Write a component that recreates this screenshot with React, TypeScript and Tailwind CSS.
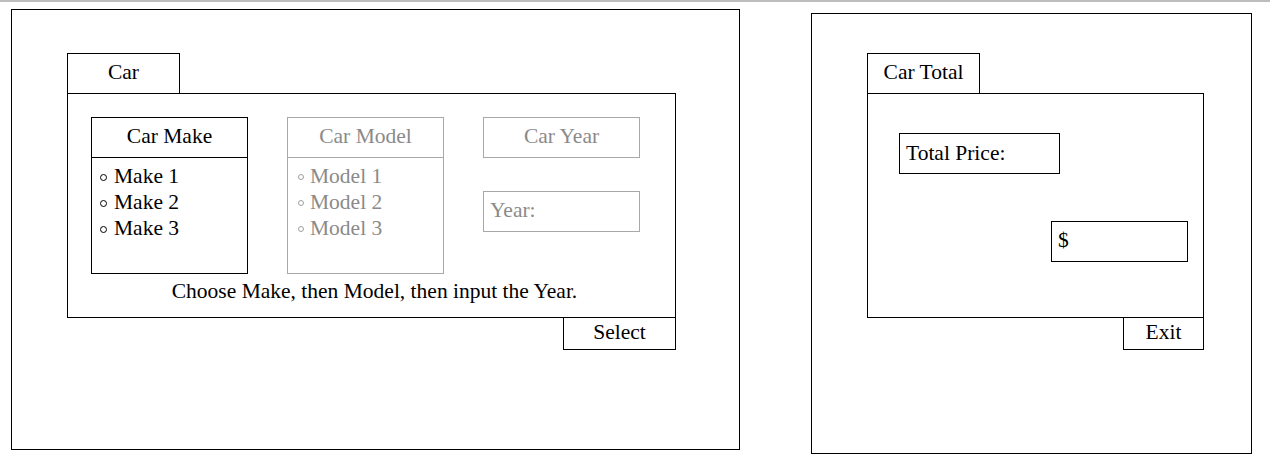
import React from 'react';

// round bullet used in the make / model lists
const Bullet = ({ muted }: { muted?: boolean }) => (
  <span
    className={`inline-block rounded-full border ${muted ? 'w-[6px] h-[6px] border-[#a0a0a0] mr-[6px]' : 'w-[7px] h-[7px] border-black mr-[7px]'}`}
  />
);

const ListBox = ({ title, items, muted }: { title: string; items: string[]; muted?: boolean }) => (
  <div
    className={`w-[157px] h-[157px] border flex flex-col ${muted ? 'border-[#a8a8a8] text-[#8a8a8a]' : 'border-black text-black'}`}
  >
    <div
      className={`h-[40px] shrink-0 border-b flex items-center justify-center pb-[2px] ${muted ? 'border-[#a8a8a8]' : 'border-black'}`}
    >
      {title}
    </div>
    <ul className={`pt-[6px] ${muted ? 'pl-[10px]' : 'pl-[8px]'}`}>
      {items.map((item) => (
        <li key={item} className="h-[26px] flex items-center">
          <Bullet muted={muted} />
          {item}
        </li>
      ))}
    </ul>
  </div>
);

const Tab = ({ label }: { label: string }) => (
  <div className="w-[113px] h-[40px] border border-b-0 border-black flex items-center justify-center pb-[2px]">
    {label}
  </div>
);

const CarWindow = () => (
  <div className="ml-[11px] mt-[9px] w-[729px] h-[441px] border border-black shrink-0">
    <div className="ml-[55px] mt-[43px] w-[609px] flex flex-col">
      <Tab label="Car" />
      <div className="h-[225px] border border-black flex flex-col">
        <div className="pt-[23px] pl-[23px] flex gap-[39px]">
          <ListBox title="Car Make" items={['Make 1', 'Make 2', 'Make 3']} />
          <ListBox title="Car Model" items={['Model 1', 'Model 2', 'Model 3']} muted />
          <div className="flex flex-col gap-[33px] text-[#8a8a8a]">
            <div className="w-[157px] h-[41px] border border-[#a8a8a8] flex items-center justify-center pb-[2px]">
              Car Year
            </div>
            <div className="w-[157px] h-[41px] border border-[#a8a8a8] flex items-center pl-[6px] pb-[1px]">
              Year:
            </div>
          </div>
        </div>
        <div className="mt-[5px] h-[24px] leading-[24px] text-center pl-[6px]">
          Choose Make, then Model, then input the Year.
        </div>
      </div>
      <div className="self-end w-[113px] h-[32px] border border-t-0 border-black flex items-center justify-center pb-[2px]">
        Select
      </div>
    </div>
  </div>
);

const TotalWindow = () => (
  <div className="ml-[71px] mt-[13px] w-[441px] h-[441px] border border-black shrink-0">
    <div className="ml-[55px] mt-[39px] w-[337px] flex flex-col">
      <Tab label="Car Total" />
      <div className="h-[225px] border border-black flex flex-col">
        <div className="ml-[31px] mt-[39px] w-[161px] h-[41px] border border-black flex items-center pl-[6px]">
          Total Price:
        </div>
        <div className="self-end mr-[15px] mt-[47px] w-[137px] h-[41px] border border-black flex items-center pl-[6px] pb-[1px]">
          $
        </div>
      </div>
      <div className="self-end w-[81px] h-[32px] border border-t-0 border-black flex items-center justify-center pb-[2px]">
        Exit
      </div>
    </div>
  </div>
);

export default function App() {
  return (
    <div className="w-[1270px] h-[462px] bg-white text-black text-[21.5px] leading-none font-['Liberation_Serif','Times_New_Roman',serif]">
      <div className="h-[2px] bg-[#bdbdbd]" />
      <div className="flex items-start -mt-[2px]">
        <CarWindow />
        <TotalWindow />
      </div>
    </div>
  );
}
